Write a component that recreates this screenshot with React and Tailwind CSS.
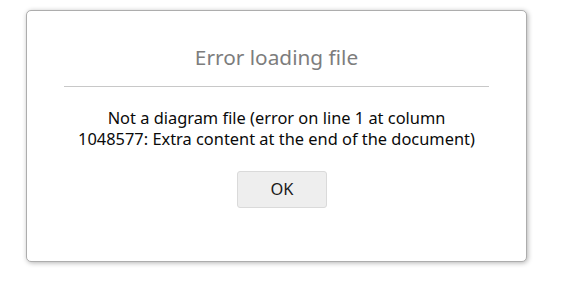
export default function App() {
  return (
    <div className="min-h-[298px] bg-white pt-[10px] pl-[26px] font-['Noto_Sans',sans-serif]">
      <div className="flex h-[252px] w-[501px] flex-col rounded-[5px] border border-[#adadad] bg-white shadow-[1px_1px_5px_rgba(0,0,0,0.3)]">
        <h2 className="mt-[32px] text-center text-[20.8px] leading-[28px] text-[#7d7d7d]">
          Error loading file
        </h2>
        <div className="mx-auto mt-[15px] h-px w-[425px] bg-[#c8c8c8]" />
        <p className="mt-[20px] text-center text-[16.4px] leading-[21px] text-[#0a0a0a]">
          Not a diagram file (error on line 1 at column
          <br />
          1048577: Extra content at the end of the document)
        </p>
        <div className="mt-[22px] flex">
          <button className="ml-[210px] h-[37px] w-[90px] rounded-[3px] border border-[#dadada] bg-[#eeeeee] text-[16.4px] text-[#1a1a1a]">
            OK
          </button>
        </div>
      </div>
    </div>
  );
}
